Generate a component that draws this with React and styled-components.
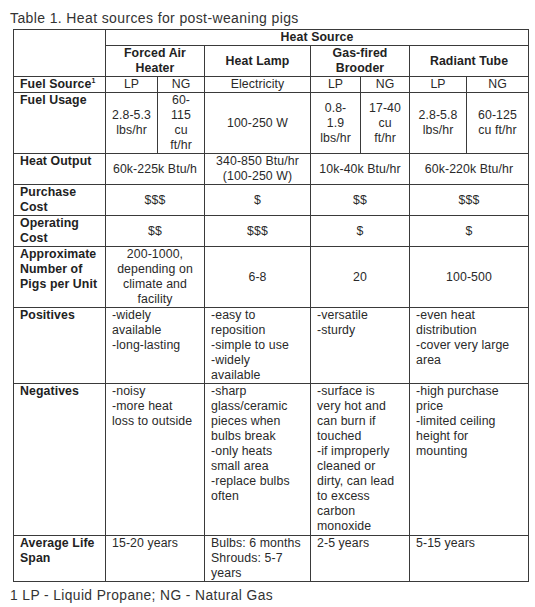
import React from "react";
import styled, { createGlobalStyle } from "styled-components";

const Global = createGlobalStyle`
  body {
    margin: 0;
    background: #fff;
    font-family: "Liberation Sans", Arial, sans-serif;
    color: #222;
  }
`;

const Page = styled.div`
  padding: 9px 0 0 10px;
  width: 535px;
  box-sizing: border-box;
`;

const Caption = styled.div`
  font-size: 14px;
  letter-spacing: 0.38px;
  color: #333;
  line-height: 18px;
  height: 20px;
`;

const Table = styled.table`
  margin-left: 3px;
  border-collapse: collapse;
  table-layout: fixed;
  width: 515px;
  font-size: 12.3px;
  line-height: 15px;
  letter-spacing: 0.1px;
  td, th {
    border: 1px solid #3a3a3a;
    padding: 0 6px;
    overflow: hidden;
  }
`;

const Head = styled.th`
  font-weight: bold;
  text-align: center;
  vertical-align: middle;
`;

const Label = styled.td`
  font-weight: bold;
  vertical-align: top;
`;

const Cell = styled.td`
  text-align: ${(p) => (p.$left ? "left" : "center")};
  vertical-align: ${(p) => (p.$top ? "top" : "middle")};
  padding: ${(p) => (p.$left ? "0 6px" : "0 2px")} !important;
  color: #2a2a2a;
`;

const Row = styled.tr`
  height: ${(p) => p.$h}px;
`;

const Sup = styled.sup`
  font-size: 7px;
  line-height: 0;
  vertical-align: 5px;
`;

const Footnote = styled.div`
  font-size: 13.8px;
  letter-spacing: 0.4px;
  color: #333;
  margin-top: 6px;
`;

function Lines({ t }) {
  return t.map((s, i) => (
    <React.Fragment key={i}>
      {i > 0 && <br />}
      {s}
    </React.Fragment>
  ));
}

const widths = [92, 52, 47, 106, 50, 49, 57, 62];

export default function App() {
  return (
    <Page>
      <Global />
      <Caption>Table 1. Heat sources for post-weaning pigs</Caption>
      <Table>
        <colgroup>
          {widths.map((w, i) => (
            <col key={i} style={{ width: w }} />
          ))}
        </colgroup>
        <tbody>
          <Row $h={16}>
            <td rowSpan={2}></td>
            <Head colSpan={7}>Heat Source</Head>
          </Row>
          <Row $h={31}>
            <Head colSpan={2}><Lines t={["Forced Air", "Heater"]} /></Head>
            <Head>Heat Lamp</Head>
            <Head colSpan={2}><Lines t={["Gas-fired", "Brooder"]} /></Head>
            <Head colSpan={2}>Radiant Tube</Head>
          </Row>
          <Row $h={16}>
            <Label>Fuel Source<Sup>1</Sup></Label>
            <Cell>LP</Cell>
            <Cell>NG</Cell>
            <Cell>Electricity</Cell>
            <Cell>LP</Cell>
            <Cell>NG</Cell>
            <Cell>LP</Cell>
            <Cell>NG</Cell>
          </Row>
          <Row $h={61}>
            <Label>Fuel Usage</Label>
            <Cell><Lines t={["2.8-5.3", "lbs/hr"]} /></Cell>
            <Cell><Lines t={["60-", "115", "cu", "ft/hr"]} /></Cell>
            <Cell>100-250 W</Cell>
            <Cell><Lines t={["0.8-", "1.9", "lbs/hr"]} /></Cell>
            <Cell><Lines t={["17-40", "cu", "ft/hr"]} /></Cell>
            <Cell><Lines t={["2.8-5.8", "lbs/hr"]} /></Cell>
            <Cell><Lines t={["60-125", "cu ft/hr"]} /></Cell>
          </Row>
          <Row $h={31}>
            <Label>Heat Output</Label>
            <Cell colSpan={2}>60k-225k Btu/h</Cell>
            <Cell><Lines t={["340-850 Btu/hr", "(100-250 W)"]} /></Cell>
            <Cell colSpan={2}>10k-40k Btu/hr</Cell>
            <Cell colSpan={2}>60k-220k Btu/hr</Cell>
          </Row>
          <Row $h={31}>
            <Label><Lines t={["Purchase", "Cost"]} /></Label>
            <Cell colSpan={2}>$$$</Cell>
            <Cell>$</Cell>
            <Cell colSpan={2}>$$</Cell>
            <Cell colSpan={2}>$$$</Cell>
          </Row>
          <Row $h={31}>
            <Label><Lines t={["Operating", "Cost"]} /></Label>
            <Cell colSpan={2}>$$</Cell>
            <Cell>$$$</Cell>
            <Cell colSpan={2}>$</Cell>
            <Cell colSpan={2}>$</Cell>
          </Row>
          <Row $h={61}>
            <Label><Lines t={["Approximate", "Number of", "Pigs per Unit"]} /></Label>
            <Cell colSpan={2}><Lines t={["200-1000,", "depending on", "climate and", "facility"]} /></Cell>
            <Cell>6-8</Cell>
            <Cell colSpan={2}>20</Cell>
            <Cell colSpan={2}>100-500</Cell>
          </Row>
          <Row $h={76}>
            <Label>Positives</Label>
            <Cell colSpan={2} $left $top><Lines t={["-widely", "available", "-long-lasting"]} /></Cell>
            <Cell $left $top><Lines t={["-easy to", "reposition", "-simple to use", "-widely", "available"]} /></Cell>
            <Cell colSpan={2} $left $top><Lines t={["-versatile", "-sturdy"]} /></Cell>
            <Cell colSpan={2} $left $top><Lines t={["-even heat", "distribution", "-cover very large", "area"]} /></Cell>
          </Row>
          <Row $h={152}>
            <Label>Negatives</Label>
            <Cell colSpan={2} $left $top><Lines t={["-noisy", "-more heat", "loss to outside"]} /></Cell>
            <Cell $left $top>
              <Lines t={["-sharp", "glass/ceramic", "pieces when", "bulbs break", "-only heats", "small area", "-replace bulbs", "often"]} />
            </Cell>
            <Cell colSpan={2} $left $top>
              <Lines t={["-surface is", "very hot and", "can burn if", "touched", "-if improperly", "cleaned or", "dirty, can lead", "to excess", "carbon", "monoxide"]} />
            </Cell>
            <Cell colSpan={2} $left $top>
              <Lines t={["-high purchase", "price", "-limited ceiling", "height for", "mounting"]} />
            </Cell>
          </Row>
          <Row $h={46}>
            <Label><Lines t={["Average Life", "Span"]} /></Label>
            <Cell colSpan={2} $left $top>15-20 years</Cell>
            <Cell $left $top><Lines t={["Bulbs: 6 months", "Shrouds: 5-7", "years"]} /></Cell>
            <Cell colSpan={2} $left $top>2-5 years</Cell>
            <Cell colSpan={2} $left $top>5-15 years</Cell>
          </Row>
        </tbody>
      </Table>
      <Footnote>1 LP - Liquid Propane; NG - Natural Gas</Footnote>
    </Page>
  );
}
